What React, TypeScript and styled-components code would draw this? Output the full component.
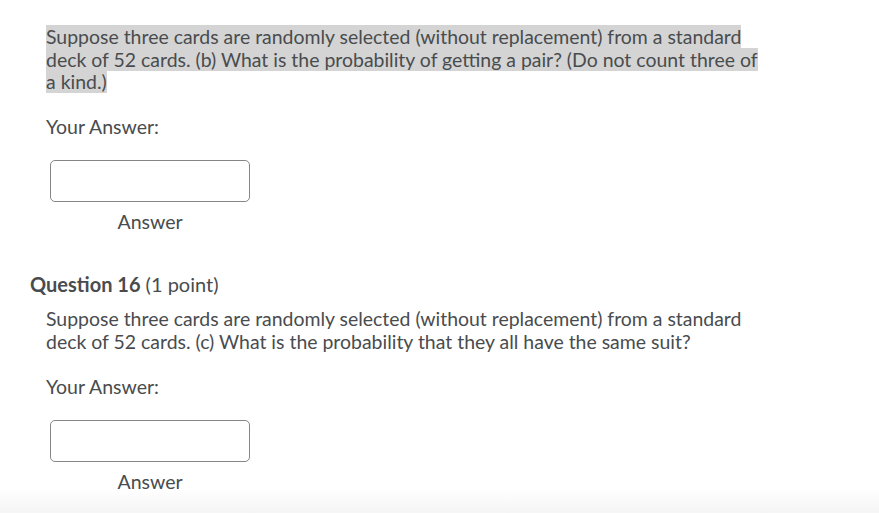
import styled, { createGlobalStyle } from "styled-components"

const GlobalStyle = createGlobalStyle`
  html, body {
    margin: 0;
    padding: 0;
    background: #ffffff;
  }
  body {
    font-family: Lato, "Open Sans", sans-serif;
    color: #494c4e;
  }
`

const Page = styled.div`
  width: 879px;
  height: 513px;
  overflow: hidden;
  position: relative;
  box-sizing: border-box;
  padding: 26px 0 0 30px;
  background: linear-gradient(to bottom, #ffffff 0, #ffffff 488px, #f5f5f5 513px);
`

const Question = styled.section<{ $gap?: number }>`
  display: flex;
  flex-direction: column;
  margin-top: ${(p) => p.$gap ?? 0}px;
`

const QuestionTitle = styled.h2`
  margin: 0 0 13px;
  font-size: 20px;
  line-height: 22px;
  font-weight: 400;
  strong {
    font-weight: 700;
  }
`

const Body = styled.div`
  padding-left: 16px;
  width: 720px;
`

const Prompt = styled.p`
  margin: 0;
  font-size: 19.45px;
  line-height: 22.5px;
`

const Selected = styled.span`
  background: #d4d4d4;
`

const Label = styled.div`
  margin-top: 22.5px;
  font-size: 19.5px;
  line-height: 22px;
`

const AnswerBlock = styled.div`
  display: flex;
  flex-direction: column;
  align-items: center;
  width: 200px;
  margin: 22px 0 0 4px;
`

const Input = styled.input`
  box-sizing: border-box;
  width: 200px;
  height: 42px;
  border: 1px solid #868686;
  border-radius: 5px;
  background: #fff;
  outline: none;
`

const Caption = styled.div`
  margin-top: 9px;
  font-size: 19.5px;
  line-height: 22px;
`

function AnswerField() {
  return (
    <AnswerBlock>
      <Input type="text" aria-label="Answer" />
      <Caption>Answer</Caption>
    </AnswerBlock>
  )
}

export default function App() {
  return (
    <>
      <GlobalStyle />
      <Page>
        <Question>
          <Body>
            <Prompt>
              <Selected>
                Suppose three cards are randomly selected (without replacement) from a standard deck
                of 52 cards. (b) What is the probability of getting a pair? (Do not count three of a
                kind.)
              </Selected>
            </Prompt>
            <Label>Your Answer:</Label>
            <AnswerField />
          </Body>
        </Question>
        <Question $gap={40}>
          <QuestionTitle>
            <strong>Question 16</strong> (1 point)
          </QuestionTitle>
          <Body>
            <Prompt>
              Suppose three cards are randomly selected (without replacement) from a standard deck
              of 52 cards. (c) What is the probability that they all have the same suit?
            </Prompt>
            <Label>Your Answer:</Label>
            <AnswerField />
          </Body>
        </Question>
      </Page>
    </>
  )
}
